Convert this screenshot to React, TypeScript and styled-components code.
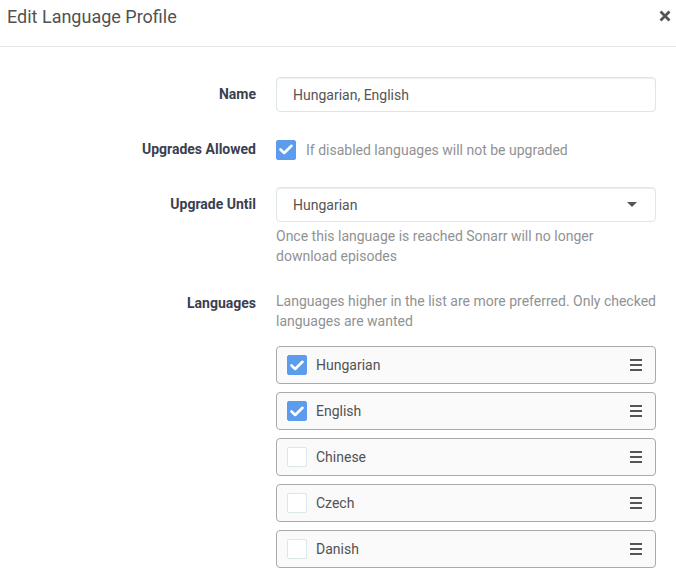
import React, { useState } from 'react';
import styled, { createGlobalStyle } from 'styled-components';

const GlobalStyle = createGlobalStyle`
  html, body {
    margin: 0;
    padding: 0;
    background: #fff;
  }
  body {
    font-family: Roboto, "Liberation Sans", Arial, sans-serif;
    font-size: 14px;
    color: #515253;
  }
`;

const Modal = styled.div`
  width: 676px;
  height: 570px;
  overflow: hidden;
  background: #fff;
`;

const Header = styled.div`
  display: flex;
  justify-content: space-between;
  align-items: flex-start;
  height: 47px;
  padding: 5px 4px 0 7px;
  box-sizing: border-box;
  border-bottom: 1px solid #e5e5e5;
`;

const Title = styled.h4`
  margin: 0;
  font-size: 18px;
  font-weight: 400;
  line-height: 24px;
  color: #515253;
`;

const CloseButton = styled.button`
  border: 0;
  background: none;
  padding: 0;
  margin-top: 4px;
  width: 14px;
  height: 14px;
  display: flex;
  align-items: center;
  justify-content: center;
  cursor: pointer;
`;

const Body = styled.div`
  padding: 30px 20px 0 6px;
`;

const FormGroup = styled.div`
  display: flex;
  margin-bottom: 20px;
`;

const Label = styled.label`
  flex: 0 0 250px;
  margin-right: 20px;
  text-align: right;
  font-weight: 700;
  line-height: 35px;
  color: #3a3f51;
`;

const Field = styled.div`
  flex: 1;
  min-width: 0;
`;

const TextInput = styled.input`
  display: block;
  width: 100%;
  height: 35px;
  box-sizing: border-box;
  padding: 6px 16px;
  border: 1px solid #dde6e9;
  border-radius: 4px;
  box-shadow: inset 0 1px 1px rgba(0, 0, 0, 0.075);
  font-family: inherit;
  font-size: 14px;
  color: #555;
  outline: none;
`;

const CheckRow = styled.div`
  display: flex;
  align-items: center;
  height: 35px;
  gap: 10px;
`;

const Box = styled.span<{ $checked: boolean }>`
  flex: 0 0 auto;
  width: 20px;
  height: 20px;
  box-sizing: border-box;
  border-radius: 2px;
  border: 1px solid ${p => (p.$checked ? '#5d9cec' : '#dde6e9')};
  background: ${p => (p.$checked ? '#5d9cec' : '#fff')};
  display: flex;
  align-items: center;
  justify-content: center;
`;

const HelpText = styled.div<{ $top?: number }>`
  margin-top: ${p => p.$top ?? 4}px;
  line-height: 20px;
  color: #909293;
`;

const Select = styled.div`
  display: flex;
  align-items: center;
  justify-content: space-between;
  height: 35px;
  box-sizing: border-box;
  padding: 0 18px 0 16px;
  border: 1px solid #dde6e9;
  border-radius: 4px;
  box-shadow: inset 0 1px 1px rgba(0, 0, 0, 0.075);
  color: #555;
`;

const Caret = styled.span`
  width: 0;
  height: 0;
  border-left: 5px solid transparent;
  border-right: 5px solid transparent;
  border-top: 5px solid #555;
`;

const List = styled.div`
  margin-top: 15px;
  display: flex;
  flex-direction: column;
  gap: 8px;
`;

const Item = styled.div`
  display: flex;
  align-items: center;
  height: 38px;
  box-sizing: border-box;
  padding: 0 13px 0 10px;
  border: 1px solid #aaa;
  border-radius: 4px;
  background: #fafafa;
`;

const ItemLabel = styled.span`
  flex: 1;
  margin-left: 9px;
  color: #515253;
`;

const Handle = styled.span`
  display: flex;
  flex-direction: column;
  gap: 3px;
  width: 12px;

  i {
    display: block;
    height: 2px;
    background: #555;
  }
`;

const Check = () => (
  <svg width="14" height="11" viewBox="0 0 14 11">
    <path d="M1.5 5.5 L5.2 9 L12.5 1.8" fill="none" stroke="#fff" strokeWidth="2.6" strokeLinecap="round" strokeLinejoin="round" />
  </svg>
);

const Checkbox: React.FC<{ checked: boolean }> = ({ checked }) => (
  <Box $checked={checked}>{checked && <Check />}</Box>
);

const languages = [
  { name: 'Hungarian', allowed: true },
  { name: 'English', allowed: true },
  { name: 'Chinese', allowed: false },
  { name: 'Czech', allowed: false },
  { name: 'Danish', allowed: false },
];

const App: React.FC = () => {
  const [name, setName] = useState('Hungarian, English');

  return (
    <Modal>
      <GlobalStyle />
      <Header>
        <Title>Edit Language Profile</Title>
        <CloseButton aria-label="Close">
          <svg width="12" height="12" viewBox="0 0 12 12">
            <path d="M1.5 1.5 L10.5 10.5 M10.5 1.5 L1.5 10.5" stroke="#555" strokeWidth="2.8" />
          </svg>
        </CloseButton>
      </Header>

      <Body>
        <FormGroup>
          <Label>Name</Label>
          <Field>
            <TextInput value={name} onChange={e => setName(e.target.value)} />
          </Field>
        </FormGroup>

        <FormGroup>
          <Label>Upgrades Allowed</Label>
          <Field>
            <CheckRow>
              <Checkbox checked />
              <HelpText $top={0}>If disabled languages will not be upgraded</HelpText>
            </CheckRow>
          </Field>
        </FormGroup>

        <FormGroup>
          <Label>Upgrade Until</Label>
          <Field>
            <Select>
              <span>Hungarian</span>
              <Caret />
            </Select>
            <HelpText>Once this language is reached Sonarr will no longer download episodes</HelpText>
          </Field>
        </FormGroup>

        <FormGroup>
          <Label>Languages</Label>
          <Field>
            <HelpText $top={5}>
              Languages higher in the list are more preferred. Only checked languages are wanted
            </HelpText>
            <List>
              {languages.map(lang => (
                <Item key={lang.name}>
                  <Checkbox checked={lang.allowed} />
                  <ItemLabel>{lang.name}</ItemLabel>
                  <Handle>
                    <i />
                    <i />
                    <i />
                  </Handle>
                </Item>
              ))}
            </List>
          </Field>
        </FormGroup>
      </Body>
    </Modal>
  );
};

export default App;
